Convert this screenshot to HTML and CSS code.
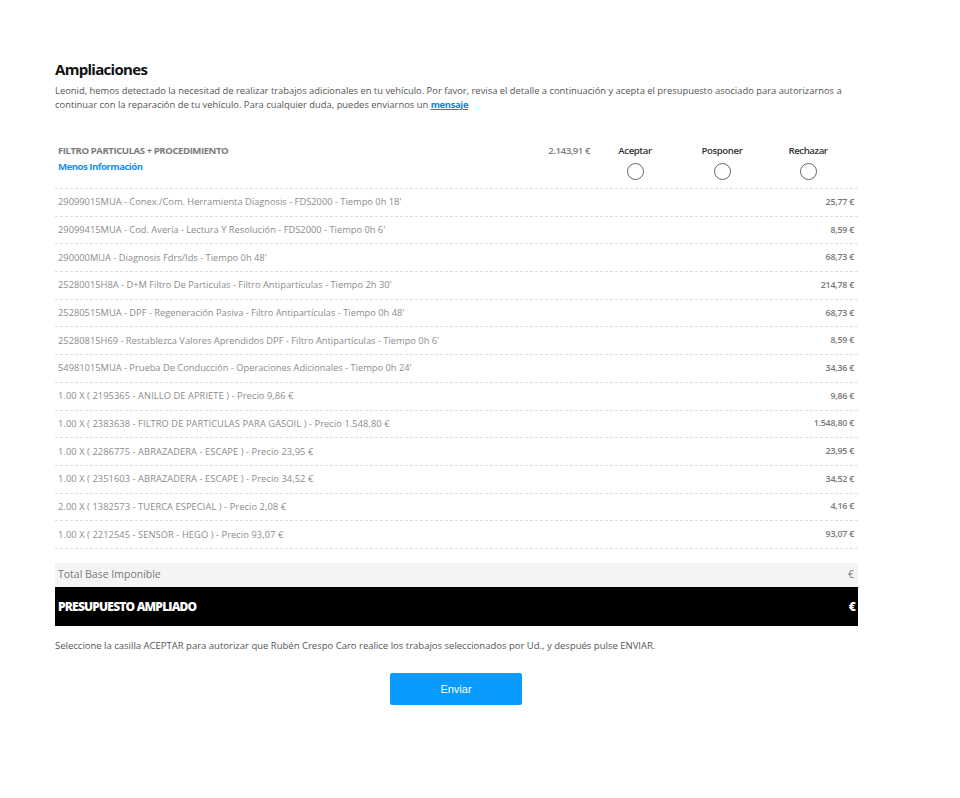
FILE: index.html
```html
<!DOCTYPE html>
<html lang="es">

<head>
    <meta charset="utf-8">
    <title>Ampliaciones</title>
    <link rel="stylesheet" href="styles.css">
</head>

<body>
    <div class="content">
        <h1>Ampliaciones</h1>
        <p class="intro">Leonid, hemos detectado la necesitad de realizar trabajos adicionales en tu vehículo. Por favor, revisa el detalle a continuación y acepta el presupuesto asociado para autorizarnos a continuar con la reparación de tu vehículo. Para cualquier duda, puedes enviarnos un <a href="#">mensaje</a></p>

        <div class="job-head">
            <div class="job-name">
                <div class="job-title">FILTRO PARTICULAS + PROCEDIMIENTO</div>
                <a class="job-more" href="#">Menos Información</a>
            </div>
            <div class="job-price">2.143,91 €</div>
            <div class="choice choice-accept">
                <span>Aceptar</span>
                <div class="radio"></div>
            </div>
            <div class="choice choice-later">
                <span>Posponer</span>
                <div class="radio"></div>
            </div>
            <div class="choice choice-reject">
                <span>Rechazar</span>
                <div class="radio"></div>
            </div>
        </div>

        <div class="lines">
            <div class="line"><span>29099015MUA - Conex./Com. Herramienta Diagnosis - FDS2000 - Tiempo 0h 18'</span><b>25,77 €</b></div>
            <div class="line"><span>29099415MUA - Cod. Avería - Lectura Y Resolución - FDS2000 - Tiempo 0h 6'</span><b>8,59 €</b></div>
            <div class="line"><span>290000MUA - Diagnosis Fdrs/Ids - Tiempo 0h 48'</span><b>68,73 €</b></div>
            <div class="line"><span>25280015H8A - D+M Filtro De Particulas - Filtro Antipartículas - Tiempo 2h 30'</span><b>214,78 €</b></div>
            <div class="line"><span>25280515MUA - DPF - Regeneración Pasiva - Filtro Antipartículas - Tiempo 0h 48'</span><b>68,73 €</b></div>
            <div class="line"><span>25280815H69 - Restablezca Valores Aprendidos DPF - Filtro Antipartículas - Tiempo 0h 6'</span><b>8,59 €</b></div>
            <div class="line"><span>54981015MUA - Prueba De Conducción - Operaciones Adicionales - Tiempo 0h 24'</span><b>34,36 €</b></div>
            <div class="line part"><span>1.00 X ( 2195365 - ANILLO DE APRIETE ) - Precio 9,86 €</span><b>9,86 €</b></div>
            <div class="line part"><span>1.00 X ( 2383638 - FILTRO DE PARTICULAS PARA GASOIL ) - Precio 1.548,80 €</span><b>1.548,80 €</b></div>
            <div class="line part"><span>1.00 X ( 2286775 - ABRAZADERA - ESCAPE ) - Precio 23,95 €</span><b>23,95 €</b></div>
            <div class="line part"><span>1.00 X ( 2351603 - ABRAZADERA - ESCAPE ) - Precio 34,52 €</span><b>34,52 €</b></div>
            <div class="line part"><span>2.00 X ( 1382573 - TUERCA ESPECIAL ) - Precio 2,08 €</span><b>4,16 €</b></div>
            <div class="line part"><span>1.00 X ( 2212545 - SENSOR - HEGO ) - Precio 93,07 €</span><b>93,07 €</b></div>
        </div>

        <div class="total-base">
            <span>Total Base Imponible</span>
            <span>€</span>
        </div>
        <div class="total-final">
            <span>PRESUPUESTO AMPLIADO</span>
            <span>€</span>
        </div>

        <p class="notice">Seleccione la casilla ACEPTAR para autorizar que Rubén Crespo Caro realice los trabajos seleccionados por Ud., y después pulse ENVIAR.</p>

        <div class="submit-row">
            <button class="submit-btn" type="button">Enviar</button>
        </div>
    </div>
</body>

</html>
```

FILE: styles.css
```css
html {
    font-family: 'Open Sans', sans-serif;
    box-sizing: border-box;
}

body {
    margin: 0px;
    background-color: white;
}

.content {
    width: 803px;
    margin-left: 55px;
    padding-top: 60px;
}

h1 {
    margin: 0px 0px 5px;
    font-size: 15px;
    line-height: 19px;
    font-weight: 700;
    letter-spacing: -0.7px;
    color: #111;
}

.intro {
    margin: 0px;
    font-size: 9.4px;
    line-height: 14px;
    color: #555;
}

.intro a {
    color: #0a84e0;
    font-weight: 700;
    letter-spacing: -0.3px;
}

.job-head {
    display: flex;
    height: 48px;
    margin-top: 28px;
    padding-top: 2px;
    box-sizing: border-box;
    font-size: 9.6px;
    line-height: 14px;
}

.job-name {
    width: 490px;
    padding-left: 3px;
    padding-top: 2px;
}

.job-title {
    font-weight: 700;
    letter-spacing: -0.45px;
    color: #7b7b7b;
    margin-bottom: 2px;
}

.job-more {
    display: block;
    font-weight: 700;
    letter-spacing: -0.5px;
    color: #1a8fe8;
    text-decoration: none;
}

.job-price {
    width: 42px;
    padding-top: 2px;
    text-align: right;
    font-weight: 600;
    letter-spacing: -0.45px;
    color: #7b7b7b;
    white-space: nowrap;
}

.choice {
    display: flex;
    flex-direction: column;
    align-items: center;
    width: 50px;
    padding-top: 2px;
    color: #333;
    font-weight: 600;
    letter-spacing: -0.4px;
}

.choice-accept {
    margin-left: 20px;
}

.choice-later {
    margin-left: 37px;
}

.choice-reject {
    margin-left: 36px;
}

.radio {
    width: 15px;
    height: 15px;
    margin-top: 5px;
    border: 1px solid #666;
    border-radius: 50%;
}

.lines {
    border-top: 1px dashed #dedede;
}

.line {
    display: flex;
    justify-content: space-between;
    align-items: center;
    height: 27.7px;
    box-sizing: border-box;
    padding: 0px 4px 1px 3px;
    border-bottom: 1px dashed #dedede;
    font-size: 9.3px;
    color: #8c8c8c;
}

.part span {
    letter-spacing: 0.07px;
}

.line b {
    font-size: 8.8px;
    font-weight: 600;
    letter-spacing: -0.2px;
    color: #777;
}

.total-base {
    display: flex;
    justify-content: space-between;
    align-items: center;
    height: 24px;
    box-sizing: border-box;
    margin-top: 14px;
    padding: 0px 4px 2px 3px;
    background-color: #f4f4f4;
    font-size: 10.5px;
    color: #7a7a7a;
}

.total-final {
    display: flex;
    justify-content: space-between;
    align-items: center;
    height: 39px;
    padding: 0px 3px;
    box-sizing: border-box;
    background-color: black;
    color: white;
    font-size: 12px;
    font-weight: 800;
    letter-spacing: -0.8px;
}

.notice {
    margin: 13px 0px 0px;
    font-size: 9.5px;
    line-height: 14px;
    color: #555;
}

.submit-row {
    display: flex;
    justify-content: center;
    margin-top: 20px;
    padding-right: 1px;
}

.submit-btn {
    width: 132px;
    height: 32px;
    border: none;
    border-radius: 2px;
    background-color: #0a9bff;
    color: white;
    font-family: 'Liberation Sans', sans-serif;
    font-size: 11px;
}
```
